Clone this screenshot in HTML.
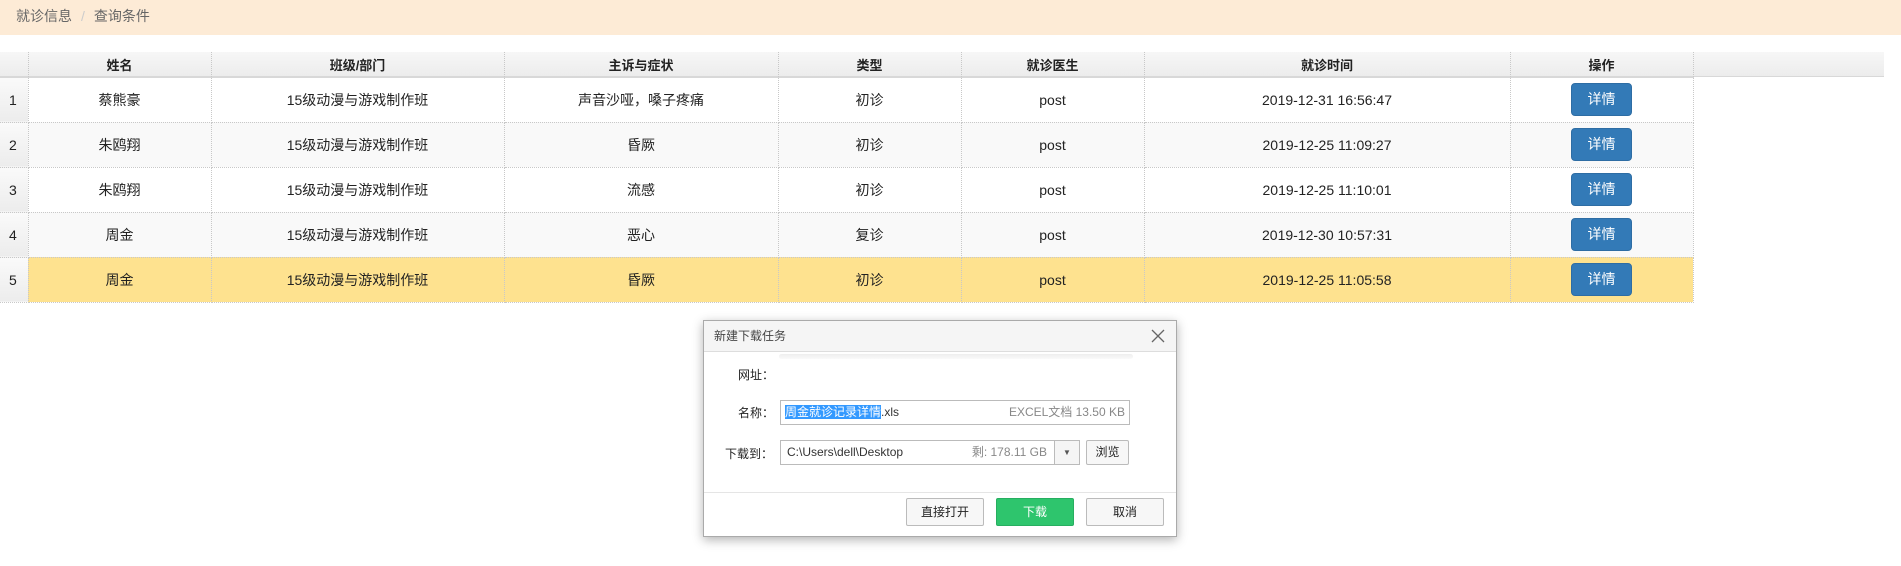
<!DOCTYPE html>
<html><head><meta charset="utf-8"><style>
*{margin:0;padding:0;box-sizing:border-box}
body{width:1901px;height:566px;background:#fff;font-family:"Liberation Sans","Noto Sans CJK SC",sans-serif;position:relative;overflow:hidden;color:#222}
.bc{position:absolute;left:0;top:0;width:1901px;height:35px;background:#fdebd6;font-size:14px;color:#666;line-height:33px;padding-left:16px}
.bc .sl{color:#ccc;margin:0 9px}
table{position:absolute;left:0;top:52px;border-collapse:collapse;table-layout:fixed;font-size:14px}
.hbg{position:absolute;left:0;top:52px;width:1884px;height:25px;background:linear-gradient(#f7f7f7,#ececec);border-bottom:1px solid #d8d8d8}
td,th{border:1px dotted #c8c8c8;text-align:center;height:45px;padding:0}
th{height:25px;font-weight:bold;font-size:13px;background:transparent;border-top:none;border-bottom:1px solid #d8d8d8}
td.n{text-align:left;padding-left:9px;border-left:none}
th.n{border-left:none}
tr.a td{background:#fff}
tr.b td{background:#f9f9f9}
tr.h td{background:#fee28f}
tr td.n{background:linear-gradient(#fafafa,#ececec)}
.btn{display:inline-block;width:61px;height:33px;background:#337ab7;border:1px solid #2e6da4;border-radius:4px;color:#fff;font-size:14px;line-height:31px}
.dlg{position:absolute;left:703px;top:320px;width:474px;height:217px;background:#fff;border:1px solid #aaa;box-shadow:0 3px 10px rgba(0,0,0,.3);font-size:12px;color:#333}
.tt{height:31px;background:#f5f5f5;border-bottom:1px solid #ddd;line-height:31px;padding-left:10px;font-size:12px;color:#444}
.x{position:absolute;right:10px;top:7px;width:16px;height:16px}
.lab{position:absolute;font-size:12px;color:#222}
.inp{position:absolute;border:1px solid #bbb;background:#fff;height:25px;font-size:12px;line-height:23px}
.b2{position:absolute;top:177px;height:28px;border:1px solid #bbb;background:#f7f7f7;border-radius:2px;font-size:12px;text-align:center;line-height:26px;color:#222}
</style></head><body>
<div class="bc">就诊信息<span class="sl">/</span>查询条件</div>
<div class="hbg"></div>
<table>
<colgroup><col style="width:28px"><col style="width:183px"><col style="width:293px"><col style="width:274px"><col style="width:183px"><col style="width:183px"><col style="width:366px"><col style="width:183px"></colgroup>
<tr><th class="n"></th><th>姓名</th><th>班级/部门</th><th>主诉与症状</th><th>类型</th><th>就诊医生</th><th>就诊时间</th><th>操作</th></tr>
<tr class="a"><td class="n">1</td><td>蔡熊豪</td><td>15级动漫与游戏制作班</td><td>声音沙哑，嗓子疼痛</td><td>初诊</td><td>post</td><td>2019-12-31 16:56:47</td><td><span class="btn">详情</span></td></tr>
<tr class="b"><td class="n">2</td><td>朱鸥翔</td><td>15级动漫与游戏制作班</td><td>昏厥</td><td>初诊</td><td>post</td><td>2019-12-25 11:09:27</td><td><span class="btn">详情</span></td></tr>
<tr class="a"><td class="n">3</td><td>朱鸥翔</td><td>15级动漫与游戏制作班</td><td>流感</td><td>初诊</td><td>post</td><td>2019-12-25 11:10:01</td><td><span class="btn">详情</span></td></tr>
<tr class="b"><td class="n">4</td><td>周金</td><td>15级动漫与游戏制作班</td><td>恶心</td><td>复诊</td><td>post</td><td>2019-12-30 10:57:31</td><td><span class="btn">详情</span></td></tr>
<tr class="h"><td class="n">5</td><td>周金</td><td>15级动漫与游戏制作班</td><td>昏厥</td><td>初诊</td><td>post</td><td>2019-12-25 11:05:58</td><td><span class="btn">详情</span></td></tr>
</table>
<div class="dlg">
<div class="tt">新建下载任务</div>
<svg class="x" viewBox="0 0 16 16"><path d="M2 2L14 14M14 2L2 14" stroke="#666" stroke-width="1.3"/></svg>
<div style="position:absolute;left:75px;top:33px;width:354px;height:5px;background:linear-gradient(#eee,#fafafa);border-radius:3px"></div>
<div class="lab" style="left:34px;top:45px">网址：</div>
<div class="lab" style="left:34px;top:83px">名称：</div>
<div class="inp" style="left:76px;top:79px;width:350px;padding-left:4px"><span style="background:#3399ff;color:#fff">周金就诊记录详情</span>.xls<span style="position:absolute;right:4px;color:#888">EXCEL文档 13.50 KB</span></div>
<div class="lab" style="left:21px;top:124px">下载到：</div>
<div class="inp" style="left:76px;top:119px;width:276px;padding-left:6px">C:\Users\dell\Desktop<span style="position:absolute;right:8px;color:#888">剩: 178.11 GB</span></div>
<div class="inp" style="left:350px;top:119px;width:26px;background:#f5f5f5;text-align:center;font-size:8px;color:#555">▼</div>
<div class="b2" style="left:382px;top:119px;width:43px;height:25px;line-height:23px">浏览</div>
<div style="position:absolute;left:0;top:171px;width:100%;border-top:1px solid #e5e5e5"></div>
<div class="b2" style="left:202px;width:78px">直接打开</div>
<div class="b2" style="left:292px;width:78px;background:#2ec56d;border-color:#27ae60;color:#fff">下载</div>
<div class="b2" style="left:382px;width:78px">取消</div>
</div>
</body></html>
